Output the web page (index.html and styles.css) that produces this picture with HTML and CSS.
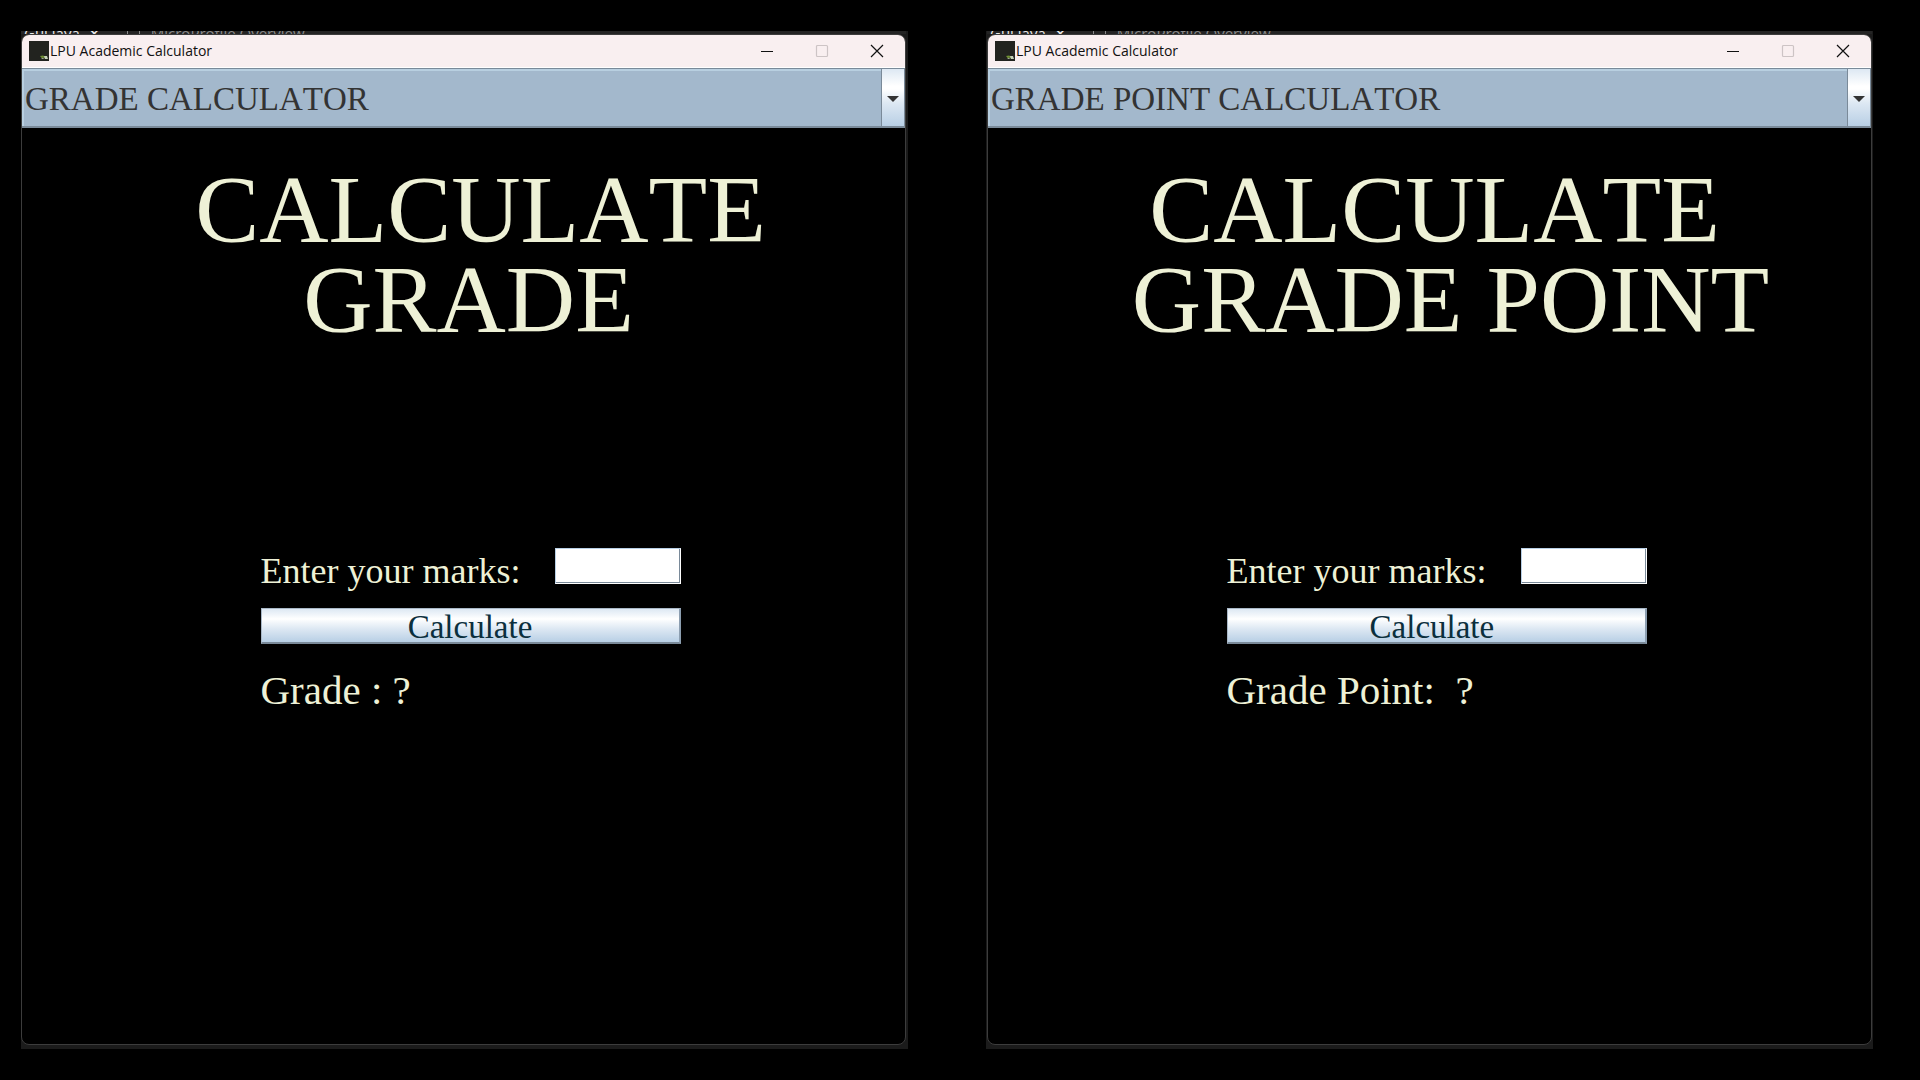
FILE: index.html
```html
<!DOCTYPE html>
<html lang="en">
<head>
<meta charset="utf-8">
<title>LPU Academic Calculator</title>
<link rel="stylesheet" href="styles.css">
</head>
<body>
<main class="desktop">
  <section class="pane">
    <div class="editor-tabs"><span class="tab-active">Gui.java</span><span class="tab-close">✕</span><span class="tab-mark"></span><span class="tab-name">MicroProfile Overview</span></div>
    <div class="window">
      <header class="titlebar">
        <svg class="app-icon" viewBox="0 0 20 20" aria-hidden="true"><path fill="#22231f" d="M0 0h20v20H0z"/><path fill="#6f8f35" d="M11 15l3-0.500 2 1 0 2-2-1-1 1z"/><path fill="#c5cfb8" d="M15 15l3 0 1 3-3 0zM12 18l2-1 1 1z"/></svg>
        <span class="title">LPU Academic Calculator</span>
        <button class="win-btn" aria-label="Minimize"><svg viewBox="0 0 14 14"><path d="M1 7.500h12"/></svg></button>
        <button class="win-btn" aria-label="Maximize" disabled><svg viewBox="0 0 14 14"><rect x="1.500" y="1.500" width="11" height="11" rx="1"/></svg></button>
        <button class="win-btn" aria-label="Close"><svg viewBox="0 0 14 14"><path d="M1 1l12 12M13 1L1 13"/></svg></button>
      </header>
      <div class="combo">
        <select class="combo-select" aria-label="Calculator type"><option>GRADE CALCULATOR</option><option>GRADE POINT CALCULATOR</option></select>
        <span class="combo-arrow"><svg viewBox="0 0 12 6"><path d="M0 0h12L6 6z"/></svg></span>
      </div>
      <div class="content">
        <h1 class="heading"><span class="line">CALCULATE</span><span class="line line-spaced">GRADE</span></h1>
        <form class="form">
          <div class="row"><label class="label" for="marks-grade">Enter your marks:</label><input class="field" id="marks-grade" type="text"></div>
          <button class="calc" type="button">Calculate</button>
          <output class="result" for="marks-grade">Grade : ?</output>
        </form>
      </div>
    </div>
  </section>
  <section class="pane pane-inset">
    <div class="editor-tabs"><span class="tab-active">Gui.java</span><span class="tab-close">✕</span><span class="tab-mark"></span><span class="tab-name">MicroProfile Overview</span></div>
    <div class="window">
      <header class="titlebar">
        <svg class="app-icon" viewBox="0 0 20 20" aria-hidden="true"><path fill="#22231f" d="M0 0h20v20H0z"/><path fill="#6f8f35" d="M11 15l3-0.500 2 1 0 2-2-1-1 1z"/><path fill="#c5cfb8" d="M15 15l3 0 1 3-3 0zM12 18l2-1 1 1z"/></svg>
        <span class="title">LPU Academic Calculator</span>
        <button class="win-btn" aria-label="Minimize"><svg viewBox="0 0 14 14"><path d="M1 7.500h12"/></svg></button>
        <button class="win-btn" aria-label="Maximize" disabled><svg viewBox="0 0 14 14"><rect x="1.500" y="1.500" width="11" height="11" rx="1"/></svg></button>
        <button class="win-btn" aria-label="Close"><svg viewBox="0 0 14 14"><path d="M1 1l12 12M13 1L1 13"/></svg></button>
      </header>
      <div class="combo">
        <select class="combo-select" aria-label="Calculator type"><option>GRADE CALCULATOR</option><option selected>GRADE POINT CALCULATOR</option></select>
        <span class="combo-arrow"><svg viewBox="0 0 12 6"><path d="M0 0h12L6 6z"/></svg></span>
      </div>
      <div class="content">
        <h1 class="heading heading-wide"><span class="line line-spaced">CALCULATE</span><span class="line">GRADE POINT</span></h1>
        <form class="form">
          <div class="row"><label class="label" for="marks-point">Enter your marks:</label><input class="field" id="marks-point" type="text"></div>
          <button class="calc" type="button">Calculate&nbsp;</button>
          <output class="result" for="marks-point">Grade Point:&nbsp; ?</output>
        </form>
      </div>
    </div>
  </section>
</main>
</body>
</html>
```
FILE: styles.css
```css
* {
  box-sizing: border-box;
}

body {
  margin: 0;
  background: #000;
  color: #eef1d6;
  font-family: "Liberation Serif", "Times New Roman", serif;
  font-kerning: none;
}

.desktop {
  display: flex;
  gap: 78px;
  min-height: 100vh;
  padding: 31px 47px 31px 21px;
}

.pane {
  display: flex;
  flex: 1;
  flex-direction: column;
  min-width: 0;
  padding: 0 2px 4px 0;
  background: #1b1b1b;
}

.pane-inset {
  padding: 0 1px 4px 1px;
}

/* Sliver of the editor's tab strip above the window */
.editor-tabs {
  display: flex;
  align-items: center;
  height: 3px;
  overflow: hidden;
  background: #242424;
  color: #8a8a8a;
  font: 15px/16px "Open Sans", sans-serif;
  white-space: nowrap;
}

.tab-active {
  padding-left: 3px;
  color: #e8e8e8;
}

.tab-close {
  padding-left: 8px;
  color: #e8e8e8;
}

.tab-mark {
  width: 13px;
  height: 3px;
  margin: 0 11px 0 26px;
  border: solid #8a8a8a;
  border-width: 0 1px;
}

.window {
  display: flex;
  flex: 1;
  flex-direction: column;
  overflow: hidden;
  border: 1px solid #3c3c3c;
  border-radius: 8px;
  background: #000;
}

.titlebar {
  display: flex;
  align-items: center;
  height: 33px;
  padding: 0 1px 0 7px;
  border-bottom: 1px solid #fff;
  background: #f9eff0;
  color: #111;
}

.app-icon {
  width: 20px;
  height: 20px;
}

.title {
  flex: 1;
  padding-left: 1px;
  font: 14px/20px "Open Sans", sans-serif;
}

.win-btn {
  display: grid;
  place-items: center;
  width: 55px;
  height: 32px;
  padding: 0;
  border: 0;
  background: none;
  color: #111;
}

.win-btn:disabled {
  color: #cdc4c5;
}

.win-btn svg {
  width: 14px;
  height: 14px;
  fill: none;
  stroke: currentColor;
  stroke-width: 1.2;
}

.combo {
  position: relative;
  height: 60px;
}

.combo-select {
  width: 100%;
  height: 60px;
  margin: 0;
  padding: 2px 28px 0 0;
  appearance: none;
  border: solid #7a8a99;
  border-width: 1px 0 2px;
  border-radius: 0;
  outline: 0;
  background: #a3b8cc;
  box-shadow: inset 2px 2px #b8cfe0;
  color: #333;
  font: 33px/38px "Liberation Serif", "Times New Roman", serif;
  font-kerning: none;
  text-indent: 3px;
}

.combo-arrow {
  position: absolute;
  top: 0;
  right: 0;
  display: grid;
  place-items: center;
  width: 24px;
  height: 60px;
  padding-top: 2px;
  border: 1px solid #7a8a99;
  border-bottom-width: 2px;
  background: linear-gradient(#dde8f3, #fff 30%, #fff 35%, #dde8f3 60%, #b8cfe5);
  pointer-events: none;
}

.combo-arrow svg {
  width: 12px;
  height: 6px;
  fill: #333;
}

.content {
  display: flex;
  flex: 1;
  flex-direction: column;
  align-items: center;
  padding: 37px 0 0 14px;
}

.heading {
  margin: 0;
  padding-left: 20px;
  font-size: 96px;
  font-weight: 400;
  line-height: 90px;
  text-align: center;
}

.heading-wide {
  padding-left: 28px;
}

.line {
  display: block;
}

.line-spaced {
  padding-right: 24px;
}

.heading-wide .line-spaced {
  padding-right: 32px;
}

.form {
  display: flex;
  flex-direction: column;
  width: 420px;
  margin-top: 203px;
}

.row {
  display: flex;
  align-items: flex-start;
  justify-content: space-between;
  height: 60px;
}

.label {
  padding-top: 3px;
  font-size: 36px;
  line-height: 40px;
}

.field {
  width: 126px;
  height: 36px;
  padding: 0 4px;
  border: 1px solid #7a8a99;
  border-color: #b8cfe5 #fff #fff #b8cfe5;
  border-radius: 0;
  outline: 0;
  background: #fff;
  box-shadow: inset -1px -1px #7a8a99;
  font: 24px/32px "Liberation Serif", "Times New Roman", serif;
}

.calc {
  height: 36px;
  padding: 2px 0 0;
  border: 1px solid #a9b8c7;
  border-right: 2px solid #8c9eb0;
  border-bottom: 2px solid #7a8a99;
  background: linear-gradient(#dde8f3, #fff 30%, #dde8f3 60%, #b8cfe5);
  color: #0b2f3d;
  font: 33px/32px "Liberation Serif", "Times New Roman", serif;
}

.result {
  margin-top: 22px;
  font-size: 41px;
  line-height: 48px;
}
```
